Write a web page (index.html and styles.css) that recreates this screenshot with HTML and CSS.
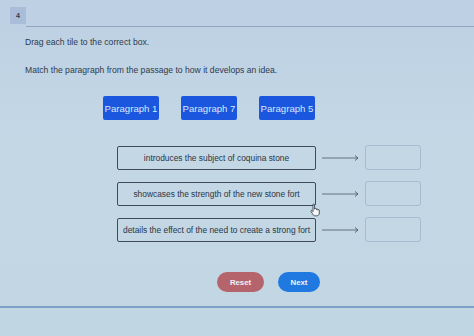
FILE: index.html
```html
<!DOCTYPE html>
<html>
<head>
<meta charset="utf-8">
<link rel="stylesheet" href="styles.css">
</head>
<body>
<div class="page">
  <div class="header">
    <span class="badge">4</span>
    <span class="rule"></span>
  </div>
  <div class="content">
    <p class="instr">Drag each tile to the correct box.</p>
    <p class="instr second">Match the paragraph from the passage to how it develops an idea.</p>
    <div class="tiles">
      <div class="tile">Paragraph 1</div>
      <div class="tile">Paragraph 7</div>
      <div class="tile">Paragraph 5</div>
    </div>
    <div class="pairs">
      <div class="pair">
        <div class="desc">introduces the subject of coquina stone</div>
        <svg class="arrow" width="38" height="8" viewBox="0 0 38 8"><line x1="0" y1="4" x2="36" y2="4" stroke="#4a5866" stroke-width="0.8"/><path d="M33 1.5 L36 4 L33 6.5" fill="none" stroke="#4a5866" stroke-width="0.9"/></svg>
        <div class="target"></div>
      </div>
      <div class="pair">
        <div class="desc">showcases the strength of the new stone fort</div>
        <svg class="arrow" width="38" height="8" viewBox="0 0 38 8"><line x1="0" y1="4" x2="36" y2="4" stroke="#4a5866" stroke-width="0.8"/><path d="M33 1.5 L36 4 L33 6.5" fill="none" stroke="#4a5866" stroke-width="0.9"/></svg>
        <div class="target"></div>
        <svg class="cursor" width="12" height="14" viewBox="0 0 12 14"><path d="M3 1.5 C3 0.8 4.4 0.8 4.4 1.5 L4.4 6 L5 6 C5 5 6.4 5 6.4 6 L6.4 6.6 C6.5 5.8 7.8 5.8 7.8 6.6 L7.8 7.2 C8 6.5 9.3 6.5 9.3 7.3 L9.3 10 C9.3 11.8 8.2 12.8 6.6 12.8 L5.2 12.8 C4 12.8 3.3 12.2 2.6 11 L1 8.4 C0.6 7.7 1.6 7 2.2 7.7 L3 8.6 Z" fill="#f4f6f8" stroke="#2c3440" stroke-width="0.8"/></svg>
      </div>
      <div class="pair">
        <div class="desc">details the effect of the need to create a strong fort</div>
        <svg class="arrow" width="38" height="8" viewBox="0 0 38 8"><line x1="0" y1="4" x2="36" y2="4" stroke="#4a5866" stroke-width="0.8"/><path d="M33 1.5 L36 4 L33 6.5" fill="none" stroke="#4a5866" stroke-width="0.9"/></svg>
        <div class="target"></div>
      </div>
    </div>
    <div class="actions">
      <button class="btn reset">Reset</button>
      <button class="btn next">Next</button>
    </div>
  </div>
  <div class="footer-rule"></div>
</div>
</body>
</html>
```
FILE: styles.css
```css
html, body {
  margin: 0;
  padding: 0;
}
body {
  width: 474px;
  height: 336px;
  overflow: hidden;
  background: linear-gradient(180deg, #bdd0e4 0%, #c4d7e5 40%, #c1d6e3 100%);
  font-family: "Liberation Sans", Arial, sans-serif;
  color: #2a3442;
}
.page {
  display: flex;
  flex-direction: column;
  height: 336px;
}
.header {
  display: flex;
  align-items: flex-end;
  padding: 6px 0 0 10px;
  height: 21px;
}
.badge {
  width: 16px;
  height: 17px;
  background: #a9bdd8;
  font-size: 7px;
  font-weight: bold;
  color: #2b3a55;
  display: flex;
  align-items: center;
  justify-content: center;
  margin-bottom: 3px;
}
.rule {
  flex: 1;
  height: 1px;
  background: #8fa7c3;
}
.content {
  padding: 0 0 0 25px;
}
.instr {
  margin: 0;
  font-size: 8.6px;
  color: #2e3a4c;
  line-height: 10px;
  padding-top: 10px;
}
.instr.second {
  padding-top: 18px;
}
.tiles {
  display: flex;
  gap: 22px;
  margin: 21px 0 0 78px;
}
.tile {
  width: 56px;
  height: 24px;
  background: #1b57de;
  border-radius: 2px;
  color: #d8e6fb;
  font-size: 9.6px;
  display: flex;
  align-items: center;
  justify-content: center;
}
.pairs {
  display: flex;
  flex-direction: column;
  gap: 11px;
  margin: 25px 0 0 92px;
}
.pair {
  display: flex;
  align-items: center;
  position: relative;
}
.desc {
  width: 197px;
  height: 22px;
  border: 1px solid #3d4b5a;
  border-radius: 2px;
  font-size: 8.4px;
  color: #2a3644;
  display: flex;
  align-items: center;
  justify-content: center;
  white-space: nowrap;
}
.arrow {
  margin-left: 6px;
  flex: none;
}
.target {
  width: 54px;
  height: 23px;
  margin-left: 5px;
  border: 1px solid #a6bccf;
  border-radius: 3px;
}
.cursor {
  position: absolute;
  left: 193px;
  top: 22px;
}
.actions {
  display: flex;
  gap: 14px;
  margin: 30px 0 0 192px;
}
.btn {
  border: none;
  height: 20px;
  border-radius: 10px;
  font-family: "Liberation Sans", Arial, sans-serif;
  font-size: 7.8px;
  font-weight: bold;
  color: #eef2f6;
  padding: 0;
}
.reset {
  width: 47px;
  background: #b6646c;
}
.next {
  width: 42px;
  background: #1f79e0;
}
.footer-rule {
  margin-top: 14px;
  height: 2px;
  background: #7fa0c8;
}
```
